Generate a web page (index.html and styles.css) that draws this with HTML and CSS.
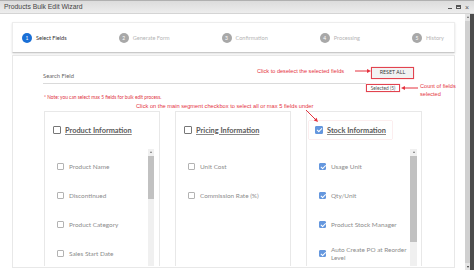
FILE: index.html
```html
<!DOCTYPE html>
<html>
<head>
<meta charset="utf-8">
<title>Products Bulk Edit Wizard</title>
<link rel="stylesheet" href="styles.css">
</head>
<body>
<div class="window">
  <div class="titlebar">
    <span class="title">Products Bulk Edit Wizard</span>
    <span class="controls"><span class="min"></span><span class="max"></span><span class="close">×</span></span>
  </div>
  <div class="main">
    <div class="content">
      <div class="stepper">
        <div class="step active"><span class="num">1</span><span class="label">Select Fields</span></div>
        <div class="step"><span class="num">2</span><span class="label">Generate Form</span></div>
        <div class="step"><span class="num">3</span><span class="label">Confirmation</span></div>
        <div class="step"><span class="num">4</span><span class="label">Processing</span></div>
        <div class="step"><span class="num">5</span><span class="label">History</span></div>
      </div>
      <div class="panel">
        <div class="toolbar">
          <div class="search"><span>Search Field</span></div>
          <div class="actions">
            <button class="reset callout">RESET ALL</button>
            <span class="selected callout">Selected (5)</span>
          </div>
        </div>
        <p class="note">* Note: you can select max 5 fields for bulk edit process.</p>
        <p class="hint">Click on the main segment checkbox to select all or max 5 fields under</p>
        <div class="columns">
          <section class="col">
            <div class="col-head"><span class="cb big"></span><span class="col-title">Product Information</span></div>
            <div class="list">
              <ul>
                <li><span class="cb"></span>Product Name</li>
                <li><span class="cb"></span>Discontinued</li>
                <li><span class="cb"></span>Product Category</li>
                <li><span class="cb"></span>Sales Start Date</li>
              </ul>
              <div class="sbar"><span class="sarrow"></span><span class="thumb t1"></span></div>
            </div>
          </section>
          <section class="col">
            <div class="col-head"><span class="cb big"></span><span class="col-title">Pricing Information</span></div>
            <div class="list">
              <ul>
                <li><span class="cb"></span>Unit Cost</li>
                <li><span class="cb"></span>Commission Rate (%)</li>
              </ul>
            </div>
          </section>
          <section class="col">
            <div class="col-head callout"><span class="cb big on"></span><span class="col-title">Stock Information</span></div>
            <div class="list">
              <ul class="narrow">
                <li><span class="cb on"></span>Usage Unit</li>
                <li><span class="cb on"></span>Qty/Unit</li>
                <li><span class="cb on"></span>Product Stock Manager</li>
                <li><span class="cb on"></span><span>Auto Create PO at Reorder Level</span></li>
              </ul>
              <div class="sbar wide"><span class="sarrow"></span><span class="thumb t3"></span></div>
            </div>
          </section>
        </div>

        <span class="ann ann-reset">Click to deselect the selected fields</span>
        <span class="ann ann-count">Count of fields selected</span>
        <svg class="arrows" width="443" height="80" viewBox="0 0 443 80">
          <g stroke="#e5333f" stroke-width="1" fill="none">
            <line x1="342" y1="15" x2="355" y2="15"/>
            <line x1="405" y1="32" x2="391" y2="32"/>
            <line x1="293" y1="54" x2="303" y2="64"/>
          </g>
          <g fill="#e5333f">
            <polygon points="358,15 354,13 354,17"/>
            <polygon points="388,32 392,30 392,34"/>
            <polygon points="305,66 300.8,64.6 303.6,61.8"/>
          </g>
        </svg>
      </div>
    </div>
    <div class="vscroll"><span class="varrow up"></span><span class="vthumb"></span><span class="varrow down"></span></div>
    <div class="edge"></div>
  </div>
</div>
</body>
</html>
```
FILE: styles.css
```css
* { box-sizing: border-box; margin: 0; padding: 0; }
html, body { width: 474px; height: 270px; overflow: hidden; background: #fff; }
body { font-family: Lato, "Open Sans", sans-serif; color: #555; }

.window { display: flex; flex-direction: column; height: 270px; }

.titlebar {
  height: 14px; flex: none;
  display: flex; align-items: center; justify-content: space-between;
  padding: 0 5px 0 4px;
  background: linear-gradient(#dcdcdc, #ededed);
  border-top: 1px solid #b0b0b0;
  border-bottom: 1px solid #d4d4d4;
}
.title { font: 6.8px/1 "Liberation Sans", Arial, sans-serif; color: #444; }
.controls { display: flex; align-items: center; gap: 4px; }
.min { width: 4px; height: 1px; background: #555; margin-top: 3px; }
.max { width: 5px; height: 4px; border: 1px solid #555; border-top-width: 2px; }
.close { font: 7px/1 "Liberation Sans", Arial, sans-serif; color: #555; }

.main { flex: 1; display: flex; min-height: 0; }
.content {
  flex: 1; min-width: 0;
  display: flex; flex-direction: column;
  padding: 8px 10px 2px 12px;
  overflow: hidden;
}

.stepper {
  height: 31px; flex: none;
  display: flex; align-items: center; justify-content: space-between;
  padding: 0 10px 0 9px;
  border: 1px solid #ededed;
  border-bottom-color: #c9c9c9;
  box-shadow: 0 1px 2px rgba(0,0,0,.12);
}
.step { display: flex; align-items: center; gap: 4px; font-size: 5.6px; color: #b5b5b5; }
.step.active { color: #333; }
.num {
  width: 10px; height: 10px; border-radius: 50%;
  background: #a8a8a8; color: #fff;
  font-size: 5px; display: flex; align-items: center; justify-content: center;
}
.step.active .num { background: #1a6fd6; }

.panel {
  flex: 1; min-height: 0;
  margin-top: 2px;
  border: 1px solid #e8e8e8;
  padding-left: 31px;
  position: relative;
}

.toolbar { display: flex; margin-top: 11px; }
.search {
  flex: 1; height: 17px; margin-left: -1px;
  border-bottom: 1px solid #dadada;
  display: flex; align-items: flex-end; padding-bottom: 3px;
  font-size: 5.8px; line-height: 8px; color: #666;
}
.actions { width: 88px; flex: none; display: flex; flex-direction: column; align-items: flex-start; }
.callout { border: 1px solid #e2434f; box-shadow: 0 0 1px rgba(226,67,79,.5); }
.reset {
  margin-left: 5px; width: 43px; height: 12px;
  background: #f2f2f2;
  font: 5.4px/1 "Open Sans", sans-serif; color: #333;
  display: flex; align-items: center; justify-content: center;
}
.selected {
  margin-top: 5px; width: 34px; height: 8px;
  background: #fff;
  font-size: 4.8px; color: #555;
  display: flex; align-items: center; justify-content: center;
}

.note { margin-top: 2px; font-size: 4.8px; line-height: 6px; color: #e03242; }
.hint {
  margin-top: 2.5px; padding-left: 92px;
  font: 5.7px/7px "Liberation Sans", Arial, sans-serif; color: #e5333f;
}

.columns {
  margin-top: 1.5px;
  display: grid; grid-template-columns: 116px 116px 116px; column-gap: 15px;
}
.col { border: 1px solid #e8e8e8; border-bottom: none; height: 155px; overflow: hidden; }
.col-head {
  margin: 9px 0 0 2px; height: 18px; padding: 0 5px;
  display: flex; align-items: center; gap: 4px;
  width: fit-content;
  border: 1px solid transparent;
}
.col-title { font-size: 7.4px; font-weight: 700; color: #5a5a5a; text-decoration: underline; text-decoration-color: #888; text-underline-offset: 1px; }

.cb {
  flex: none; display: inline-block; position: relative;
  width: 7px; height: 7px;
  border: 1px solid #b3b3b3; border-radius: 1px; background: #fff;
}
.cb.big { width: 8px; height: 8px; border-color: #777; }
.cb.on { background: #6497de; border-color: #6497de; }
.cb.on::after {
  content: ""; position: absolute; left: 1.5px; top: 0px;
  width: 2px; height: 3.5px;
  border: solid #fff; border-width: 0 1px 1px 0;
  transform: rotate(45deg);
}
.cb.big.on::after { left: 2px; top: 0px; width: 2px; height: 4px; }

.list { display: flex; margin-top: 10px; }
.list ul { flex: 1; list-style: none; padding: 3px 0 0 12px; }
.list ul.narrow { padding-right: 2px; }
.list li {
  height: 29px; display: flex; align-items: center; gap: 5px;
  font-size: 6.4px; line-height: 8px; color: #8c8c8c;
}
.sbar { width: 6px; margin-right: 5px; background: #f0f0f0; height: 117px; display: flex; flex-direction: column; align-items: center; }
.sbar.wide { width: 7px; margin-right: 4px; }
.sarrow {
  width: 0; height: 0; margin-top: 2px;
  border-left: 1.5px solid transparent; border-right: 1.5px solid transparent;
  border-bottom: 2px solid #777;
}
.thumb { width: 100%; background: #c1c1c1; margin-top: 3px; }
.t1 { height: 43px; }
.t3 { height: 86px; }

.ann { position: absolute; font: 5.6px/7px "Liberation Sans", Arial, sans-serif; color: #e5333f; }
.ann-reset { left: 244px; top: 11.5px; white-space: nowrap; }
.ann-count { left: 407px; top: 26px; width: 42px; line-height: 8px; }
.arrows { position: absolute; left: 0; top: 0; pointer-events: none; }

.vscroll { width: 5px; flex: none; background: #e4e4e4; display: flex; flex-direction: column; align-items: center; }
.varrow { width: 0; height: 0; border-left: 1.5px solid transparent; border-right: 1.5px solid transparent; }
.varrow.up { border-bottom: 2px solid #666; margin-top: 2px; }
.varrow.down { border-top: 2px solid #333; margin-bottom: 2px; }
.vthumb { flex: 1; width: 100%; margin: 3px 0; background: #d0d0d0; }
.edge { width: 4px; flex: none; background: #4c4c4c; }
```
